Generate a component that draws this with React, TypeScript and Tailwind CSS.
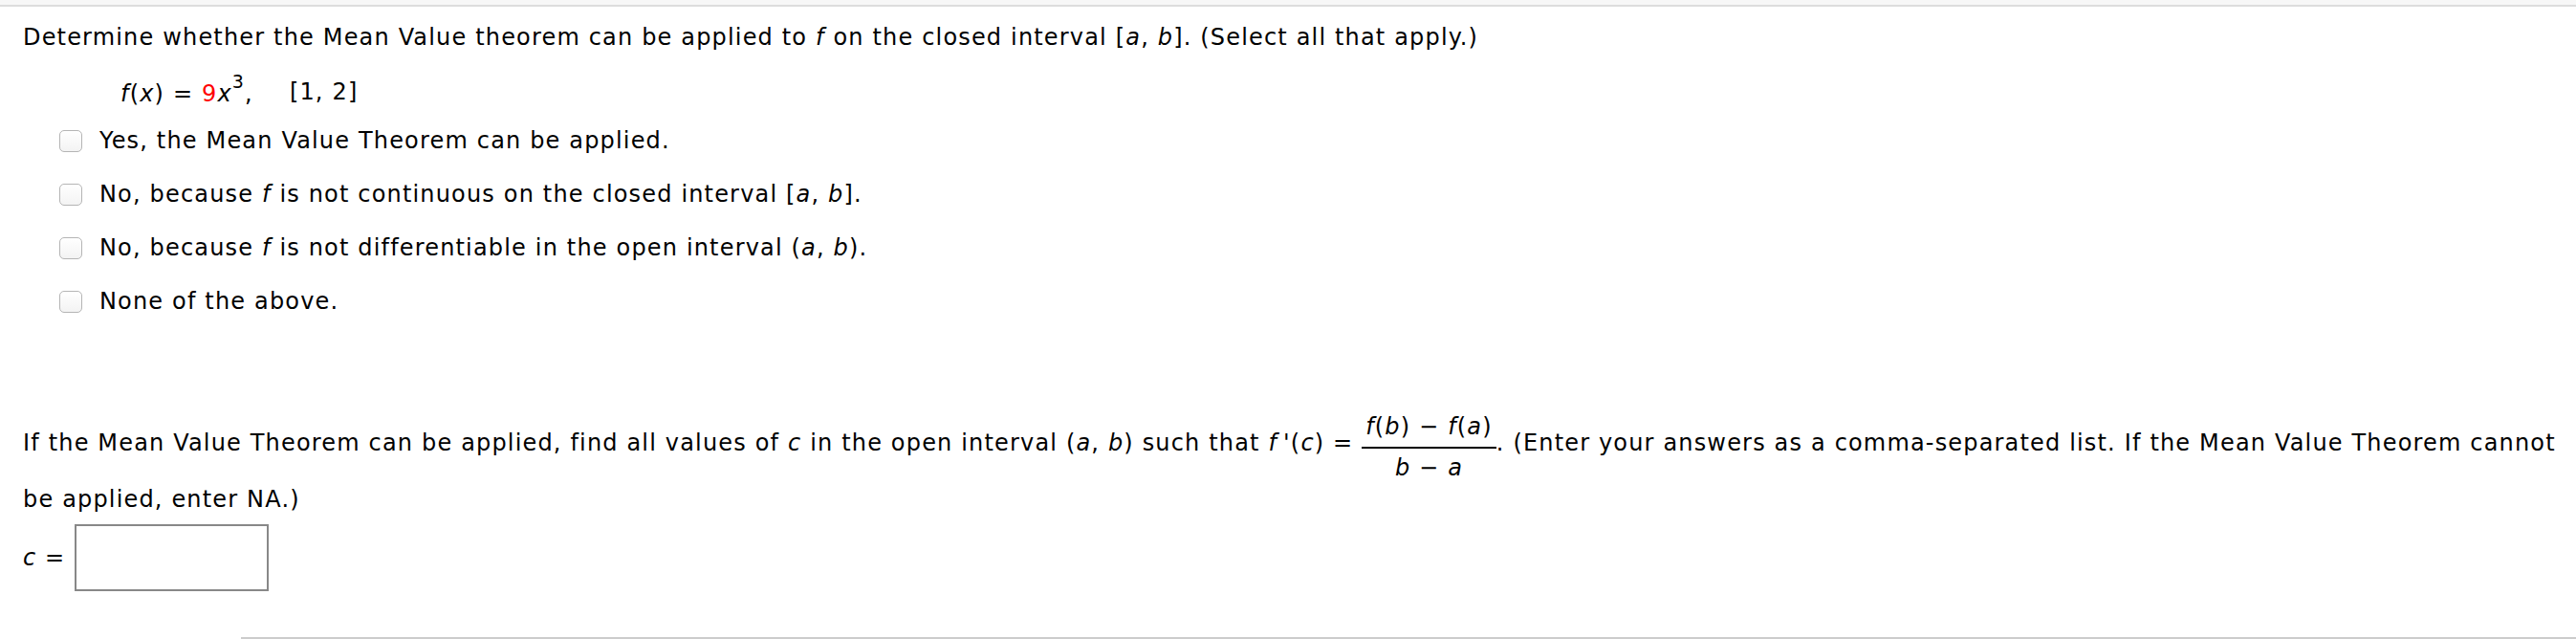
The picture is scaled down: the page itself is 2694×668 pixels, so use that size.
import React from "react";

const I = ({ children }: { children: React.ReactNode }) => (
  <span className="italic">{children}</span>
);

const Box = () => (
  <span className="inline-block w-[24px] h-[23px] rounded-[5px] border-[1.5px] border-[#b5b5b5] bg-gradient-to-b from-white to-[#f3f3f3] shrink-0" />
);

const Option = ({ children, first }: { children: React.ReactNode; first?: boolean }) => (
  <div className={`flex items-center h-[34px] ${first ? "mt-[17px]" : "mt-[22px]"}`}>
    <div className="w-[62px] shrink-0" />
    <Box />
    <div className="w-[18px] shrink-0" />
    <div className="whitespace-nowrap">{children}</div>
  </div>
);

export default function App() {
  return (
    <div
      className="w-[2694px] h-[668px] bg-white text-black text-[24px] tracking-[1.17px] overflow-hidden"
      style={{ fontFamily: '"DejaVu Sans", Verdana, sans-serif' }}
    >
      <div className="h-[5px] bg-[#f7f7f7]" />
      <div className="h-[2px] bg-[#dddddd]" />

      <div className="pl-[24px]">
        <div className="mt-[15px] h-[34px] flex items-center whitespace-nowrap">
          Determine whether the Mean Value theorem can be applied to&nbsp;<I>f</I>&nbsp;on the closed interval [<I>a</I>,&nbsp;<I>b</I>]. (Select all that apply.)
        </div>

        <div className="mt-[23px] h-[34px] flex items-center whitespace-nowrap pl-[102px]">
          <span>
            <I>f</I>(<I>x</I>) = <span className="text-[#ff0000]">9</span>
            <I>x</I>
            <span className="text-[19px] leading-none align-[14px]">3</span>,
          </span>
          <span className="w-[38px] inline-block" />
          <span>[1, 2]</span>
        </div>
      </div>

      <Option first>Yes, the Mean Value Theorem can be applied.</Option>
      <Option>
        No, because <I>f</I> is not continuous on the closed interval [<I>a</I>, <I>b</I>].
      </Option>
      <Option>
        No, because <I>f</I> is not differentiable in the open interval (<I>a</I>, <I>b</I>).
      </Option>
      <Option>None of the above.</Option>

      <div className="pl-[24px]">
        <div className="mt-[101px] h-[60px] flex items-center whitespace-nowrap">
          <span>
            If the Mean Value Theorem can be applied, find all values of <I>c</I> in the open interval (<I>a</I>, <I>b</I>) such that <I>f</I>&thinsp;'(<I>c</I>) =&nbsp;
          </span>
          <span className="inline-flex flex-col items-center mt-[9px]">
            <span className="px-[4px] leading-[28px] pb-[7px]">
              <I>f</I>(<I>b</I>) − <I>f</I>(<I>a</I>)
            </span>
            <span className="block w-full h-[2px] bg-black" />
            <span className="px-[4px] leading-[28px] pt-[6px]">
              <I>b</I> − <I>a</I>
            </span>
          </span>
          <span>
            . (Enter your answers as a comma-separated list. If the Mean Value Theorem cannot
          </span>
        </div>
        <div className="mt-[12px] h-[34px] flex items-center whitespace-nowrap">
          be applied, enter NA.)
        </div>
        <div className="mt-[9px] h-[70px] flex items-center">
          <span className="w-[23px]">
            <I>c</I>
          </span>
          <span className="w-[31px]">=</span>
          <div className="w-[203px] h-[70px] border-2 border-[#888888] bg-white" />
        </div>
      </div>

      <div className="mt-[48px] ml-[252px] h-[2px] bg-[#cccccc]" />
    </div>
  );
}
